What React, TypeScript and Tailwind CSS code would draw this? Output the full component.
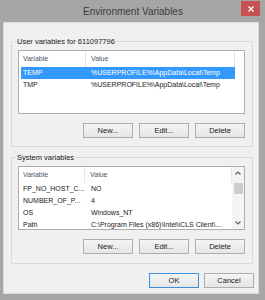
import { ReactNode } from "react";

const userVars = [
  { name: "TEMP", value: "%USERPROFILE%\\AppData\\Local\\Temp", selected: true },
  { name: "TMP", value: "%USERPROFILE%\\AppData\\Local\\Temp" },
];

const systemVars = [
  { name: "FP_NO_HOST_C...", value: "NO" },
  { name: "NUMBER_OF_P...", value: "4" },
  { name: "OS", value: "Windows_NT" },
  { name: "Path", value: "C:\\Program Files (x86)\\Intel\\iCLS Client\\..." },
];

type Row = { name: string; value: string; selected?: boolean };

function Button({ children, primary }: { children: ReactNode; primary?: boolean }) {
  return (
    <button
      className={
        "w-[50px] h-[15px] flex items-center justify-center border bg-gradient-to-b from-[#f4f4f4] to-[#e6e6e6] text-[7.5px] leading-none text-[#1a1a1a] " +
        (primary ? "border-[#3c8fe0]" : "border-[#adadad]")
      }
    >
      {children}
    </button>
  );
}

function ListView({ rows, scroll }: { rows: Row[]; scroll?: boolean }) {
  return (
    <div className="ml-[6px] mr-[7px] mt-[4px] h-[64px] border border-[#abadb3] bg-white flex overflow-hidden">
      <div className="flex-1 flex flex-col min-w-0">
        <div className="h-[16px] flex items-center text-[7px] text-[#4d5566] shrink-0">
          <div className="w-[67px] h-full flex items-center pl-[4px] border-r border-[#e5e5e5]">Variable</div>
          <div className="w-[149px] h-full flex items-center pl-[5px] border-r border-[#e5e5e5]">Value</div>
        </div>
        {rows.map((r) => (
          <div
            key={r.name}
            className={
              "ml-[2px] w-[214px] h-[12px] shrink-0 flex items-center text-[7px] whitespace-nowrap " +
              (r.selected ? "bg-[#3399ff] text-white" : "text-[#1a1a1a]")
            }
          >
            <div className="w-[65px] pl-[2px] overflow-hidden">{r.name}</div>
            <div className="w-[149px] pl-[5px] overflow-hidden">{r.value}</div>
          </div>
        ))}
      </div>
      {scroll && (
        <div className="w-[12px] h-full bg-[#f4f4f4] flex flex-col items-center shrink-0">
          <div className="h-[12px] w-full flex items-center justify-center">
            <svg width="6" height="4" viewBox="0 0 6 4">
              <path d="M0.5 3.5 L3 1 L5.5 3.5" fill="none" stroke="#606060" strokeWidth="1.2" />
            </svg>
          </div>
          <div className="mt-[4px] w-[9px] h-[11px] bg-[#cdcdcd]" />
          <div className="flex-1" />
          <div className="h-[12px] w-full flex items-center justify-center">
            <svg width="6" height="4" viewBox="0 0 6 4">
              <path d="M0.5 0.5 L3 3 L5.5 0.5" fill="none" stroke="#606060" strokeWidth="1.2" />
            </svg>
          </div>
        </div>
      )}
    </div>
  );
}

function Group({ label, rows, scroll, className }: { label: string; rows: Row[]; scroll?: boolean; className: string }) {
  return (
    <div className={"ml-[7px] mr-[5px] border border-[#d9d9d9] rounded-[2px] flex flex-col " + className}>
      <span className="-mt-[5px] ml-[4px] h-[9px] leading-[9px] px-[1px] self-start bg-[#f0f0f0] text-[7.5px] text-[#1a1a1a]">
        {label}
      </span>
      <ListView rows={rows} scroll={scroll} />
      <div className="mr-[7px] flex justify-end gap-[6px] mt-[9px]">
        <Button>New...</Button>
        <Button>Edit...</Button>
        <Button>Delete</Button>
      </div>
    </div>
  );
}

export default function App() {
  return (
    <div className="w-[265px] h-[300px] bg-[#a6a6a6] flex flex-col font-['Liberation_Sans',Arial,sans-serif] overflow-hidden">
      <div className="h-[22px] relative flex items-center justify-center shrink-0">
        <span className="text-[10px] text-[#3a3a3a] pl-[1px]">Environment Variables</span>
        <div className="absolute left-[241px] top-[1px] w-[19px] h-[15px] bg-[#c75050] flex items-center justify-center">
          <svg width="6" height="6" viewBox="0 0 6 6">
            <path d="M0.5 0.5 L5.5 5.5 M5.5 0.5 L0.5 5.5" stroke="white" strokeWidth="1.3" />
          </svg>
        </div>
      </div>
      <div className="ml-[3px] mr-[6px] h-[272px] bg-[#f0f0f0] border border-[#dcdcdc] flex flex-col">
        <Group label="User variables for 611097796" rows={userVars} className="mt-[18px] pb-[8px]" />
        <Group label="System variables" rows={systemVars} scroll className="mt-[10px] pb-[9px]" />
        <div className="mt-[9px] mr-[4px] flex justify-end gap-[5px]">
          <Button primary>OK</Button>
          <Button>Cancel</Button>
        </div>
      </div>
    </div>
  );
}
